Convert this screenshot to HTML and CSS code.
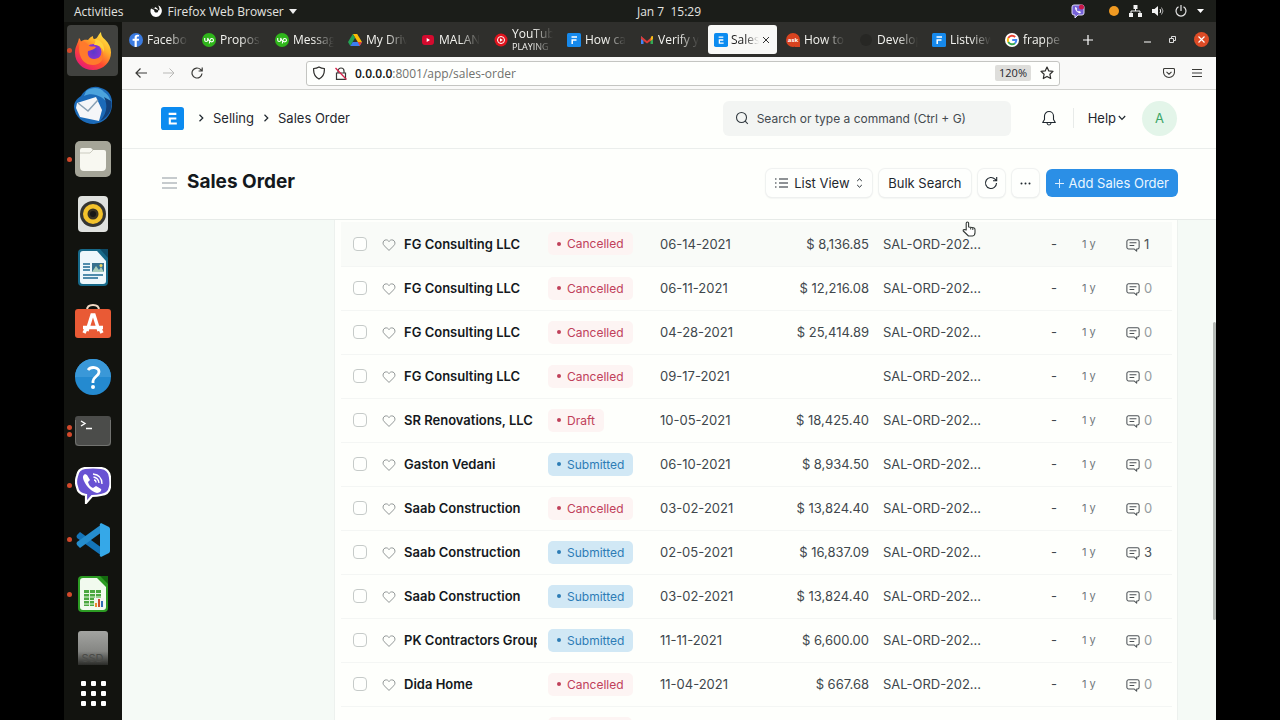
FILE: index.html
```html
<!DOCTYPE html>
<html lang="en">
<head>
  <meta charset="UTF-8">
  <meta name="viewport" content="width=device-width, initial-scale=1.0">
  <title>Sales Order</title>
  <link rel="stylesheet" href="styles.css">
</head>
<body>

<!-- shared icons -->
<svg class="sprite" aria-hidden="true">
  <symbol id="heart" viewBox="0 0 16 16"><path d="M8 14.2 2.4 8.7C.9 7.2.8 4.700 2.200 3.200c1.500-1.500 4-1.400 5.300.2L8 4l.5-.6c1.300-1.600 3.800-1.700 5.300-.2 1.400 1.500 1.300 4-.2 5.500z" fill="none" stroke="#8d9292" stroke-width="1.1" stroke-linejoin="round"/></symbol>
  <symbol id="comment" viewBox="0 0 16 16"><path d="M3 2h10a2 2 0 0 1 2 2v6.500a2 2 0 0 1-2 2h-.8V15l-3-2.500H3a2 2 0 0 1-2-2V4a2 2 0 0 1 2-2zM4.500 5.500h7M4.500 8.500h4.500" fill="none" stroke="#4c5255" stroke-width="1.200" stroke-linejoin="round" stroke-linecap="round"/></symbol>
  <symbol id="chevron" viewBox="0 0 8 8"><path d="M2.500.8 5.800 4 2.500 7.200" fill="none" stroke="#1f272e" stroke-width="1.200"/></symbol>
  <symbol id="upwork" viewBox="0 0 14 14"><circle cx="7" cy="7" r="7" fill="#2fb51b"/><path d="M2.700 5v2a1.500 1.500 0 0 0 3 0V5c.6 1.900 1.300 2.800 2 3.400M7.300 10.500l.8-3.600a1.700 1.700 0 1 1 1.700 2c-.9 0-1.500-.4-2.100-1" fill="none" stroke="#fff" stroke-width="1.100"/></symbol>
  <symbol id="frappe" viewBox="0 0 14 14"><rect width="14" height="14" rx="1.500" fill="#1689ec"/><path d="M4.500 4h5.500M5.200 11V7h4.300" fill="none" stroke="#fff" stroke-width="1.500"/></symbol>
  <symbol id="erp" viewBox="0 0 24 24"><rect width="24" height="24" rx="3" fill="#0b8bf0"/><path d="M8 7.200h8M16 12H9.200v5.200H16.500" fill="none" stroke="#fff" stroke-width="2.200"/></symbol>
</svg>

<div class="desktop">
  <header class="topbar">
    <button class="activities">Activities</button>
    <button class="app-menu">
      <svg width="12" height="12" viewBox="0 0 12 12"><path d="M2 2.500C4 4 4.800 3.200 5 2c3.500 1 4.300 5.500 1.500 5.600C4.800 7.600 4 6.500 4.200 5L1 3.500C-.8 7.500 2 12 6 12s6.500-4 5.700-7.500C11.300 2.500 10 1 8.200.4c1.200 1.700 1.600 3.600.9 5.100" fill="#fff"/></svg>
      Firefox Web Browser
      <svg width="8" height="5" viewBox="0 0 8 5"><path d="M0 0h8L4 5z" fill="#eee"/></svg>
    </button>
    <time class="clock">Jan 7&nbsp; 15:29</time>
    <div class="tray">
      <svg class="tray-viber" width="14" height="14" viewBox="0 0 14 14"><path d="M3 1h8a2 2 0 0 1 2 2v6a2 2 0 0 1-2 2H7l-3 3v-3H3a2 2 0 0 1-2-2V3a2 2 0 0 1 2-2z" fill="#7561d8" stroke="#ddd9f5"/><path d="M4 3.500c0 3 2 5 5 6l1-1.500-2-1-1 .6L5.500 6l.6-1L5 3z" fill="#fff"/><circle cx="10.500" cy="3" r="2.500" fill="#c9184a"/></svg>
      <svg width="10" height="10" viewBox="0 0 10 10"><circle cx="5" cy="5" r="5" fill="#f09a22"/></svg>
      <svg width="13" height="12" viewBox="0 0 13 12"><path d="M4.500 0h4v4h-4zM0 8h4v4H0zM9 8h4v4H9z" fill="#f2f2f2"/><path d="M6.500 4v2M2 8V6h9v2" stroke="#f2f2f2" fill="none"/></svg>
      <svg width="13" height="12" viewBox="0 0 13 12"><path d="M0 4h2.500L6 1v10L2.500 8H0z" fill="#f2f2f2"/><path d="M8 4q1.500 2 0 4" stroke="#f2f2f2" fill="none"/><path d="M9.500 2.500q3 3.500 0 7" stroke="#aaa" fill="none"/></svg>
      <svg width="12" height="12" viewBox="0 0 12 12"><path d="M6 0v6M3.500 1.700a5 5 0 1 0 5 0" stroke="#e8e8e8" stroke-width="1.200" fill="none"/></svg>
      <svg width="7" height="4" viewBox="0 0 7 4"><path d="M0 0h7L3.500 4z" fill="#fff"/></svg>
    </div>
  </header>

  <div class="workspace">
    <nav class="dock">
      <div class="dock-list">
        <a href="#" class="dock-item focused" aria-label="Firefox"><span class="dots"><i></i></span>
          <svg width="36" height="38" viewBox="0 0 36 38">
            <defs>
              <linearGradient id="ff" x1=".9" y1="0" x2=".2" y2="1"><stop offset="0" stop-color="#fff14a"/><stop offset=".35" stop-color="#ffb02a"/><stop offset=".65" stop-color="#ff4b30"/><stop offset="1" stop-color="#e5157c"/></linearGradient>
              <radialGradient id="ffp"><stop offset="0" stop-color="#5b39c9"/><stop offset="1" stop-color="#8b32d2"/></radialGradient>
            </defs>
            <path d="M4 6c1 1 1.500 2 2 3.500C8 8 10 7.500 13 8c2-3 4-3.500 5-4 0 1.500 0 2.500 1 3 2 0 3-1 4-3 1-2 2-3 3-4 0 3 1 5 4 7.500 4 4 6 8 6 13C36 30 28.500 38 18 38S0 30.500 0 21C0 14 3 12 4 6z" fill="url(#ff)"/>
            <circle cx="18.500" cy="20" r="8" fill="url(#ffp)"/>
            <path d="M5 10c5-1 7 1 9 4 3 1 5 0 7 1-2 3-5 3-8 4-1 4 1 8 6 8 5-.2 8-3 8-8 4 8-2 14-9 14C7 33 2 22 5 10z" fill="#ff7a2c"/>
            <path d="M20 7c6 1 10 6 9 13-2-6-6-7-10-7 1-2 2-4 1-6z" fill="#ffd23d"/>
          </svg></a>
        <a href="#" class="dock-item" aria-label="Thunderbird">
          <svg width="38" height="38" viewBox="0 0 38 38"><path d="M7 10C12 2 20-1 27 2c8 2 12 9 11 18-1 10-8 17-18 18C9 38 1 31 0 21c0-4 2-8 7-11z" fill="#1b6ab8"/><path d="M12 5c7-5 15-3 18 1 5 3 8 9 7 17-3-7-8-12-15-14-4-1-8-1-12 1z" fill="#4ba3dd"/><path d="M30 11c4 8 3 17-4 24 9-4 13-13 11-20z" fill="#124079"/><path d="m3 17 19-6 6 13-3 11L6 31 2 22z" fill="#f5f6f8"/><path d="m4 17 10 8 10-11" fill="none" stroke="#8aa1b4" stroke-width="1.500"/></svg></a>
        <a href="#" class="dock-item" aria-label="Files"><span class="dots"><i></i></span>
          <svg width="36" height="36" viewBox="0 0 36 36"><rect width="36" height="36" rx="5" fill="#a5a598"/><path d="M5 9q0-2 2-2h9l2 2h11q2 0 2 2v15q0 4-4 4H9q-4 0-4-4z" fill="#f8f8f1"/><path d="M5 12h10l3-3" stroke="#cbcbc0" fill="none"/></svg></a>
        <a href="#" class="dock-item" aria-label="Rhythmbox">
          <svg width="30" height="36" viewBox="0 0 30 36"><rect width="30" height="36" rx="4" fill="#dfe1de"/><circle cx="15" cy="18" r="13" fill="#353532"/><circle cx="15" cy="18" r="10" fill="#f3c22b"/><circle cx="15" cy="18" r="5.500" fill="#383223"/><circle cx="15" cy="18" r="3" fill="#161616"/></svg></a>
        <a href="#" class="dock-item" aria-label="LibreOffice Writer">
          <svg width="30" height="37" viewBox="0 0 30 37"><path d="M4 0h26v33q0 4-4 4H4q-4 0-4-4V4q0-4 4-4z" fill="#176989"/><path d="M5 2h14l9 10v20q0 3-3 3H5q-3 0-3-3V5q0-3 3-3z" fill="#eef7fb"/><path d="M22 0h8v9z" fill="#0e4a66"/><path d="M5 15h7M5 18h7M5 21h7M5 26h20M5 29h15" stroke="#1d6a91" stroke-width="1.500"/><path d="M14 14h12v9H14z" fill="#37708e"/><path d="m14 23 4-6 3 4 2-3 3 5z" fill="#a9ccba"/><circle cx="23" cy="16.500" r="1.500" fill="#efd35d"/></svg></a>
        <a href="#" class="dock-item" aria-label="Ubuntu Software">
          <svg width="36" height="36" viewBox="0 0 36 36"><path d="M12 6q0-5 6-5t6 5" fill="none" stroke="#f2d9c4" stroke-width="2"/><rect y="5" width="36" height="29" rx="3" fill="#e95a35"/><path d="m12 27 5-16h2l5 16M8 23.500h20M11 25l-2 4M25 25l2 4" fill="none" stroke="#fff" stroke-width="3.400"/></svg></a>
        <a href="#" class="dock-item" aria-label="Help">
          <svg width="36" height="36" viewBox="0 0 36 36"><circle cx="18" cy="18" r="18" fill="#248ad0"/><path d="M0 18a18 18 0 0 1 36 0z" fill="#3a98d8"/><path d="M13 11c3-4 11-3 11 2 0 4-6 5-6 9v2" fill="none" stroke="#fff" stroke-width="2.800"/><circle cx="18" cy="28" r="2" fill="#fff"/></svg></a>
        <a href="#" class="dock-item" aria-label="Terminal"><span class="dots"><i></i><i></i></span>
          <svg width="36" height="30" viewBox="0 0 36 30"><rect width="36" height="30" rx="3" fill="#4b4c4a"/><path d="M.5 4v22q0 3.500 3.500 3.500h28q3.500 0 3.500-3.500V4" fill="none" stroke="#727370"/><path d="m6 5 4 2.500L6 10M11 12.500h6" fill="none" stroke="#fff" stroke-width="1.400"/></svg></a>
        <a href="#" class="dock-item" aria-label="Viber"><span class="dots"><i></i></span>
          <svg width="36" height="37" viewBox="0 0 36 37"><path d="M10 1q8-1 16 0 8 1 9 9 1 7 0 10-1 7-9 8-4 1-9 1l-6 7v-8q-8-1-9-8-2-5 0-11 1-7 8-8z" fill="#6852d3" stroke="#fff" stroke-width="2.200"/><path d="M10 7c-3 2-2 4-1 7 3 6 7 10 13 12 3 0 5-3 4-4l-5-3-3 2c-3-1-4-3-5-6l2-2-3-5z" fill="#fff"/><path d="M18 7q9 1 9 10M18.500 10q5 1 5.500 6M19 13q2 0 2 2.500" fill="none" stroke="#fff" stroke-width="1.300"/></svg></a>
        <a href="#" class="dock-item" aria-label="Visual Studio Code"><span class="dots"><i></i></span>
          <svg width="34" height="34" viewBox="0 0 34 34"><path d="m1 12 3-3 22 16v8L1 15q-1-2 0-3z" fill="#1474b8"/><path d="m1 22 3 3L26 9V1L1 19q-1 1 0 3z" fill="#258dcd"/><path d="m25 0 8 4q1 1 1 2v22q0 1-1 2l-8 4q-2-1-1-3V3q-1-2 1-3z" fill="#35a8e8"/></svg></a>
        <a href="#" class="dock-item" aria-label="LibreOffice Calc"><span class="dots"><i></i></span>
          <svg width="30" height="36" viewBox="0 0 30 36"><path d="M4 0h26v32q0 4-4 4H4q-4 0-4-4V4q0-4 4-4z" fill="#2c9b23"/><path d="M5 2h14l9 9v20q0 3-3 3H5q-3 0-3-3V5q0-3 3-3z" fill="#f1faee"/><path d="M22 0h8v8z" fill="#14690f"/><path d="M6 14h17v16H6z" fill="#4ba83f"/><path d="M6 17.500h17M6 21h17M6 24.500h17M6 28h17M11.500 14v16M17.500 14v16" stroke="#e5f5df"/><path d="M16 22h10v9H16z" fill="#f3f3ee"/><path d="M17 27h2v4h-2z" fill="#e98d2c"/><path d="M20 23h2v8h-2z" fill="#cb4b2c"/><path d="M23 25h2v6h-2z" fill="#316fb4"/></svg></a>
        <a href="#" class="dock-item ssd" aria-label="SSD volume"><span>SSD</span></a>
      </div>
      <button class="apps" aria-label="Show applications">
        <svg width="25" height="25" viewBox="0 0 25 25" fill="#fff"><rect width="5" height="5" rx="1"/><rect x="10" width="5" height="5" rx="1"/><rect x="20" width="5" height="5" rx="1"/><rect y="10" width="5" height="5" rx="1"/><rect x="10" y="10" width="5" height="5" rx="1"/><rect x="20" y="10" width="5" height="5" rx="1"/><rect y="20" width="5" height="5" rx="1"/><rect x="10" y="20" width="5" height="5" rx="1"/><rect x="20" y="20" width="5" height="5" rx="1"/></svg>
      </button>
    </nav>

    <div class="browser">
      <div class="tabs">
        <a href="#" class="tab"><svg width="14" height="14" viewBox="0 0 14 14"><circle cx="7" cy="7" r="7" fill="#3b7be0"/><path d="M7.800 14V7.800h2l.3-2.100H7.800V4.600q0-1 1.100-1H10V1.900Q5.600 1 5.600 4.500v1.200h-2v2.100h2V14z" fill="#fff"/></svg><span class="tab-title">Facebook</span></a>
        <a href="#" class="tab"><svg width="14" height="14"><use href="#upwork"/></svg><span class="tab-title">Proposals</span></a>
        <a href="#" class="tab"><svg width="14" height="14"><use href="#upwork"/></svg><span class="tab-title">Messages</span></a>
        <a href="#" class="tab"><svg width="14" height="14" viewBox="0 0 14 14"><path d="M4.800 1h4.400L14 9H9.800z" fill="#fbbc05"/><path d="m4.800 1 2.300 3.800L2.300 13 0 9z" fill="#23a455"/><path d="M4.700 9H14l-2.300 4H2.300z" fill="#3d7df0"/><path d="M9.800 9H14l-2.300 4z" fill="#e54335"/></svg><span class="tab-title">My Drive</span></a>
        <a href="#" class="tab"><svg width="14" height="14" viewBox="0 0 14 14"><rect x="1" y="2" width="12" height="10" rx="3" fill="#d40a2e"/><path d="m5.700 5 3.300 2-3.300 2z" fill="#fff"/></svg><span class="tab-title">MALANG</span></a>
        <a href="#" class="tab"><svg width="14" height="14" viewBox="0 0 14 14"><circle cx="7" cy="7" r="6.500" fill="#e0131d"/><circle cx="7" cy="7" r="3.500" fill="none" stroke="#fff"/><path d="m6 5.300 2.800 1.700L6 8.700z" fill="#fff"/></svg><span class="tab-title two-line"><span>YouTube</span><small>PLAYING</small></span></a>
        <a href="#" class="tab"><svg width="14" height="14"><use href="#frappe"/></svg><span class="tab-title">How can</span></a>
        <a href="#" class="tab"><svg width="14" height="14" viewBox="0 0 14 14"><path d="M1 3v8h2.500V6" fill="#4285f4"/><path d="M13 3v8h-2.500V6" fill="#34a853"/><path d="m1 3 6 5 6-5v3L7 10.500 1 6z" fill="#dc3c38"/><path d="M11 3.500 13 3v3l-2.500 2z" fill="#f6bb17"/></svg><span class="tab-title">Verify your</span></a>
        <a href="#" class="tab active"><svg width="14" height="14"><use href="#erp"/></svg><span class="tab-title">Sales</span><svg width="8" height="8" viewBox="0 0 8 8"><path d="m1 1 6 6M7 1 1 7" stroke="#333"/></svg></a>
        <a href="#" class="tab"><svg width="14" height="14" viewBox="0 0 14 14"><path d="M7 0a7 7 0 1 1 0 14 7 7 0 0 1 0-14zM9 9h5v5H9z" fill="#d8431f"/><text x="7" y="9" text-anchor="middle" class="ask">ask</text></svg><span class="tab-title">How to</span></a>
        <a href="#" class="tab"><svg width="14" height="14" viewBox="0 0 14 14"><circle cx="7" cy="7" r="6" fill="#272724"/></svg><span class="tab-title">Develop</span></a>
        <a href="#" class="tab"><svg width="14" height="14"><use href="#frappe"/></svg><span class="tab-title">Listview</span></a>
        <a href="#" class="tab"><svg width="14" height="14" viewBox="0 0 14 14"><circle cx="7" cy="7" r="7" fill="#fff"/><g fill="none" stroke-width="1.900"><path d="M10.200 4A4.300 4.300 0 0 0 3.300 5" stroke="#ea4335"/><path d="M3.300 5a4.300 4.300 0 0 0 0 4" stroke="#fbbc05"/><path d="M3.300 9a4.300 4.300 0 0 0 6.700 1.200" stroke="#34a853"/><path d="M10 10.200A4.300 4.300 0 0 0 11.300 7H7.200" stroke="#4285f4"/></g></svg><span class="tab-title">frappe</span></a>
        <button class="new-tab" aria-label="New tab"><svg width="10" height="10" viewBox="0 0 10 10"><path d="M5 0v10M0 5h10" stroke="#fff" stroke-width="1.200"/></svg></button>
        <div class="window-controls">
          <button aria-label="Minimize"><svg width="7" height="7" viewBox="0 0 7 7"><path d="M0 6h7" stroke="#ddd" stroke-width="1.200"/></svg></button>
          <button aria-label="Restore"><svg width="7" height="7" viewBox="0 0 7 7"><path d="M.5 2.500h4v4h-4zM2.500 2V.5h4v4H5" fill="none" stroke="#ddd"/></svg></button>
          <button class="win-close" aria-label="Close"><svg width="7" height="7" viewBox="0 0 7 7"><path d="m.5.5 6 6M6.500.5l-6 6" stroke="#fff" stroke-width="1.200"/></svg></button>
        </div>
      </div>

      <div class="toolbar">
        <button aria-label="Back"><svg width="12" height="12" viewBox="0 0 12 12"><path d="M12 6H1M5.500 1.500 1 6l4.500 4.500" fill="none" stroke="#3b3b38" stroke-width="1.200"/></svg></button>
        <button aria-label="Forward"><svg width="12" height="12" viewBox="0 0 12 12"><path d="M0 6h11M6.500 1.500 11 6l-4.500 4.500" fill="none" stroke="#b9b9b7"/></svg></button>
        <button aria-label="Reload"><svg width="12" height="12" viewBox="0 0 12 12"><path d="M11 6.500A5 5 0 1 1 9.500 2.400L11 4M11.200.5V4H7.600" fill="none" stroke="#3b3b38" stroke-width="1.200"/></svg></button>
        <div class="urlbar">
          <svg width="12" height="14" viewBox="0 0 12 14"><path d="M6 1q2.500 1.500 5.300 1.500Q12 10 6 13 0 10 .7 2.500 3.500 2.500 6 1z" fill="none" stroke="#2c2c2a" stroke-width="1.200"/></svg>
          <svg class="insecure" width="12" height="13" viewBox="0 0 12 13"><path d="M3 6V4a3 3 0 0 1 6 0v2M1.500 6h9v6.400h-9z" fill="none" stroke="#383836" stroke-width="1.200"/><path d="m.5 1 11 11.500" stroke="#d5244c" stroke-width="1.300"/></svg>
          <label for="url">0.0.0.0</label><input id="url" type="text" value=":8001/app/sales-order">
          <button class="zoom-level">120%</button>
          <svg width="14" height="14" viewBox="0 0 14 14"><path d="m7 1 1.800 3.900 4.200.5-3.100 2.900.8 4.200L7 10.400l-3.700 2.100.8-4.200L1 5.400l4.200-.5z" fill="none" stroke="#2c2c2a" stroke-width="1.200" stroke-linejoin="round"/></svg>
        </div>
        <button aria-label="Save to Pocket"><svg width="12" height="12" viewBox="0 0 12 12"><path d="M1.500 1.500h9q1 0 1 1V5a5.500 5.500 0 0 1-11 0V2.500q0-1 1-1zM3.500 4.800 6 7.200l2.500-2.400" fill="none" stroke="#3b3b38" stroke-width="1.100"/></svg></button>
        <button aria-label="Open application menu"><svg width="10" height="10" viewBox="0 0 10 10"><path d="M0 1.500h10M0 5h10M0 8.500h10" stroke="#3b3b38" stroke-width="1.100"/></svg></button>
      </div>

      <div class="page">
        <div class="navbar">
          <a href="#" class="logo" aria-label="Home"><svg width="23" height="23"><use href="#erp"/></svg></a>
          <svg width="8" height="8"><use href="#chevron"/></svg>
          <a href="#">Selling</a>
          <svg width="8" height="8"><use href="#chevron"/></svg>
          <a href="#">Sales Order</a>
          <label class="search">
            <svg width="14" height="14" viewBox="0 0 14 14"><circle cx="6.500" cy="6.500" r="5" fill="none" stroke="#323a40" stroke-width="1.100"/><path d="m10.200 10.200 2.600 2.600" stroke="#323a40" stroke-width="1.100"/></svg>
            <input type="text" aria-label="Search" placeholder="Search or type a command (Ctrl + G)">
          </label>
          <button class="bell" aria-label="Notifications"><svg width="14" height="16" viewBox="0 0 14 16"><path d="M2.500 9.500V6a4.500 4.500 0 0 1 9 0v3.500L13.300 12.500H.7zM5 13q.3 2 2 2t2-2" fill="none" stroke="#1f272e" stroke-width="1.100" stroke-linejoin="round"/></svg></button>
          <button class="help">Help <svg width="8" height="6" viewBox="0 0 8 6"><path d="m.8 1 3.200 3.300L7.200 1" fill="none" stroke="#1f272e" stroke-width="1.200"/></svg></button>
          <button class="avatar">A</button>
        </div>

        <div class="page-head">
          <button class="sidebar-toggle" aria-label="Toggle sidebar"><svg width="15" height="12" viewBox="0 0 15 12"><path d="M0 1h15M0 6h15M0 11h15" stroke="#8d989e" stroke-width="1.200"/></svg></button>
          <h1>Sales Order</h1>
          <div class="actions">
            <label class="btn view-switch">
              <svg width="13" height="12" viewBox="0 0 13 12"><path d="M0 2h1.500M0 6h1.500M0 10h1.500M4 2h9M4 6h9M4 10h9" stroke="#1f272e" stroke-width="1.200"/></svg>
              <select aria-label="View"><option>List View</option><option>Report</option></select>
              <svg width="7" height="10" viewBox="0 0 7 10"><path d="M1.200 3 3.500.8 5.800 3M1.200 7l2.300 2.200L5.800 7" fill="none" stroke="#1f272e"/></svg>
            </label>
            <button class="btn">Bulk Search</button>
            <button class="btn btn-icon" aria-label="Refresh"><svg width="14" height="14" viewBox="0 0 14 14"><path d="M12.500 7A5.500 5.500 0 1 1 11 3.200l1.500 1.600M12.700 1v3.800H9" fill="none" stroke="#1f272e" stroke-width="1.100"/></svg></button>
            <button class="btn btn-icon" aria-label="More"><svg width="11" height="3" viewBox="0 0 11 3" fill="#1f272e"><circle cx="1.500" cy="1.500" r="1"/><circle cx="5.500" cy="1.500" r="1"/><circle cx="9.500" cy="1.500" r="1"/></svg></button>
            <button class="btn btn-primary"><svg width="9" height="9" viewBox="0 0 9 9"><path d="M4.500 0v9M0 4.500h9" stroke="#d9edff"/></svg>Add Sales Order</button>
          </div>
        </div>

        <div class="content">
          <div class="list-card">
            <table class="list">
              <colgroup><col class="c-check"><col class="c-like"><col><col class="c-status"><col class="c-date"><col class="c-amount"><col class="c-id"><col class="c-assign"><col class="c-age"><col class="c-comments"></colgroup>
              <tbody>
                <tr class="hovered">
                  <td><input type="checkbox" aria-label="Select row"></td><td><svg width="14" height="14"><use href="#heart"/></svg></td>
                  <td class="name">FG Consulting LLC</td><td><span class="pill red">Cancelled</span></td><td>06-14-2021</td><td class="amount">$ 8,136.85</td>
                  <td>SAL-ORD-202...</td><td>-</td><td class="age">1 y</td><td class="comments has"><svg width="14" height="14"><use href="#comment"/></svg>1</td>
                </tr>
                <tr>
                  <td><input type="checkbox" aria-label="Select row"></td><td><svg width="14" height="14"><use href="#heart"/></svg></td>
                  <td class="name">FG Consulting LLC</td><td><span class="pill red">Cancelled</span></td><td>06-11-2021</td><td class="amount">$ 12,216.08</td>
                  <td>SAL-ORD-202...</td><td>-</td><td class="age">1 y</td><td class="comments"><svg width="14" height="14"><use href="#comment"/></svg>0</td>
                </tr>
                <tr>
                  <td><input type="checkbox" aria-label="Select row"></td><td><svg width="14" height="14"><use href="#heart"/></svg></td>
                  <td class="name">FG Consulting LLC</td><td><span class="pill red">Cancelled</span></td><td>04-28-2021</td><td class="amount">$ 25,414.89</td>
                  <td>SAL-ORD-202...</td><td>-</td><td class="age">1 y</td><td class="comments"><svg width="14" height="14"><use href="#comment"/></svg>0</td>
                </tr>
                <tr>
                  <td><input type="checkbox" aria-label="Select row"></td><td><svg width="14" height="14"><use href="#heart"/></svg></td>
                  <td class="name">FG Consulting LLC</td><td><span class="pill red">Cancelled</span></td><td>09-17-2021</td><td class="amount"></td>
                  <td>SAL-ORD-202...</td><td>-</td><td class="age">1 y</td><td class="comments"><svg width="14" height="14"><use href="#comment"/></svg>0</td>
                </tr>
                <tr>
                  <td><input type="checkbox" aria-label="Select row"></td><td><svg width="14" height="14"><use href="#heart"/></svg></td>
                  <td class="name">SR Renovations, LLC</td><td><span class="pill red">Draft</span></td><td>10-05-2021</td><td class="amount">$ 18,425.40</td>
                  <td>SAL-ORD-202...</td><td>-</td><td class="age">1 y</td><td class="comments"><svg width="14" height="14"><use href="#comment"/></svg>0</td>
                </tr>
                <tr>
                  <td><input type="checkbox" aria-label="Select row"></td><td><svg width="14" height="14"><use href="#heart"/></svg></td>
                  <td class="name">Gaston Vedani</td><td><span class="pill blue">Submitted</span></td><td>06-10-2021</td><td class="amount">$ 8,934.50</td>
                  <td>SAL-ORD-202...</td><td>-</td><td class="age">1 y</td><td class="comments"><svg width="14" height="14"><use href="#comment"/></svg>0</td>
                </tr>
                <tr>
                  <td><input type="checkbox" aria-label="Select row"></td><td><svg width="14" height="14"><use href="#heart"/></svg></td>
                  <td class="name">Saab Construction</td><td><span class="pill red">Cancelled</span></td><td>03-02-2021</td><td class="amount">$ 13,824.40</td>
                  <td>SAL-ORD-202...</td><td>-</td><td class="age">1 y</td><td class="comments"><svg width="14" height="14"><use href="#comment"/></svg>0</td>
                </tr>
                <tr>
                  <td><input type="checkbox" aria-label="Select row"></td><td><svg width="14" height="14"><use href="#heart"/></svg></td>
                  <td class="name">Saab Construction</td><td><span class="pill blue">Submitted</span></td><td>02-05-2021</td><td class="amount">$ 16,837.09</td>
                  <td>SAL-ORD-202...</td><td>-</td><td class="age">1 y</td><td class="comments has"><svg width="14" height="14"><use href="#comment"/></svg>3</td>
                </tr>
                <tr>
                  <td><input type="checkbox" aria-label="Select row"></td><td><svg width="14" height="14"><use href="#heart"/></svg></td>
                  <td class="name">Saab Construction</td><td><span class="pill blue">Submitted</span></td><td>03-02-2021</td><td class="amount">$ 13,824.40</td>
                  <td>SAL-ORD-202...</td><td>-</td><td class="age">1 y</td><td class="comments"><svg width="14" height="14"><use href="#comment"/></svg>0</td>
                </tr>
                <tr>
                  <td><input type="checkbox" aria-label="Select row"></td><td><svg width="14" height="14"><use href="#heart"/></svg></td>
                  <td class="name">PK Contractors Group</td><td><span class="pill blue">Submitted</span></td><td>11-11-2021</td><td class="amount">$ 6,600.00</td>
                  <td>SAL-ORD-202...</td><td>-</td><td class="age">1 y</td><td class="comments"><svg width="14" height="14"><use href="#comment"/></svg>0</td>
                </tr>
                <tr>
                  <td><input type="checkbox" aria-label="Select row"></td><td><svg width="14" height="14"><use href="#heart"/></svg></td>
                  <td class="name">Dida Home</td><td><span class="pill red">Cancelled</span></td><td>11-04-2021</td><td class="amount">$ 667.68</td>
                  <td>SAL-ORD-202...</td><td>-</td><td class="age">1 y</td><td class="comments"><svg width="14" height="14"><use href="#comment"/></svg>0</td>
                </tr>
                <tr>
                  <td></td><td></td><td></td><td><span class="pill red pill-empty"></span></td><td></td><td></td><td></td><td></td><td></td><td></td>
                </tr>
              </tbody>
            </table>
          </div>
          <div class="scroll-thumb"></div>
          <svg class="pointer" width="14" height="16" viewBox="0 0 14 16"><path d="M4.200 9V2.200a1.200 1.200 0 0 1 2.400 0V6l5 .8q1.400.3 1.400 1.700v3q0 3-2.500 3.500H6.500L1.300 10q-.5-1.500 1-1.500z" fill="#fff" stroke="#333936" stroke-width="1.100" stroke-linejoin="round"/><path d="M8.700 6.500v2M10.800 7v2" stroke="#333936"/></svg>
        </div>
      </div>
    </div>
  </div>
</div>

</body>
</html>
```

FILE: styles.css
```css
* {
  box-sizing: border-box;
}

body {
  margin: 0;
  background: #000;
  font-family: Inter, "Liberation Sans", sans-serif;
  font-size: 13px;
  color: #1f272e;
}

a {
  color: inherit;
  text-decoration: none;
}

button {
  padding: 0;
  border: none;
  background: none;
  font: inherit;
  color: inherit;
  cursor: pointer;
}

svg {
  flex: none;
  display: block;
}

.sprite {
  display: none;
}

.desktop {
  display: flex;
  flex-direction: column;
  height: 100vh;
  margin: 0 64px;
  overflow: hidden;
}

/* gnome top bar */
.topbar {
  position: relative;
  display: flex;
  align-items: center;
  gap: 27px;
  height: 22px;
  padding: 0 12px 0 10px;
  background: #1b1d19;
  color: #e4e4e0;
  font-family: "Open Sans", sans-serif;
  font-size: 12px;
}

.app-menu {
  display: flex;
  align-items: center;
  gap: 5px;
}

.clock {
  position: absolute;
  left: 58px;
  right: 0;
  text-align: center;
  pointer-events: none;
}

.tray {
  display: flex;
  align-items: center;
  gap: 10px;
  margin-left: auto;
}

.tray-viber {
  margin-right: 14px;
}

.workspace {
  display: flex;
  flex: 1;
  min-height: 0;
}

/* dock */
.dock {
  display: flex;
  flex-direction: column;
  width: 58px;
  padding-top: 3px;
  background: #12130f;
}

.dock-list {
  display: flex;
  flex-direction: column;
  justify-content: space-between;
  flex: 1;
  padding: 0 4px 0 3px;
}

.dock-item {
  position: relative;
  display: flex;
  align-items: center;
  justify-content: center;
  height: 51px;
  border-radius: 4px;
}

.dock-item.focused {
  background: #41423f;
}

.dots {
  position: absolute;
  left: 0;
  display: flex;
  flex-direction: column;
  gap: 2px;
}

.dots i {
  width: 5px;
  height: 5px;
  border-radius: 50%;
  background: #d3492c;
}

.ssd span {
  display: flex;
  align-items: flex-end;
  justify-content: center;
  width: 30px;
  height: 34px;
  border-radius: 3px 3px 0 0;
  background: linear-gradient(#a3a4a1, #858683 60%, #2a2b28);
  color: #4a4b48;
  font-size: 11px;
}

.apps {
  display: flex;
  justify-content: center;
  height: 46px;
  padding-top: 7px;
}

/* firefox */
.browser {
  display: flex;
  flex-direction: column;
  flex: 1;
  min-width: 0;
  background: #fefffc;
}

.tabs {
  display: flex;
  align-items: center;
  height: 35px;
  background: #2f2f2c;
  color: #f4f4f0;
  font-family: "Open Sans", sans-serif;
  font-size: 12px;
}

.tab {
  display: flex;
  align-items: center;
  gap: 4px;
  flex: 0 1 73px;
  min-width: 0;
  height: 29px;
  padding: 0 7px;
}

.tab-title {
  flex: 1;
  overflow: hidden;
  white-space: nowrap;
  -webkit-mask-image: linear-gradient(90deg, #000 50%, transparent);
  mask-image: linear-gradient(90deg, #000 50%, transparent);
}

.two-line {
  display: flex;
  flex-direction: column;
  line-height: 14px;
}

.two-line small {
  font-size: 9px;
  line-height: 12px;
}

.tab.active {
  flex-basis: 69px;
  gap: 3px;
  margin: 0 2px;
  padding-left: 6px;
  border-radius: 3px;
  background: #f9f9f7;
  color: #222;
}

.ask {
  fill: #fff;
  font-size: 6px;
  font-weight: 700;
}

.new-tab {
  display: flex;
  justify-content: center;
  width: 34px;
}

.window-controls {
  display: flex;
  align-items: center;
  gap: 18px;
  margin-left: auto;
  padding-right: 7px;
}

.win-close {
  display: flex;
  align-items: center;
  justify-content: center;
  width: 15px;
  height: 15px;
  border-radius: 50%;
  background: #dd4b26;
}

.toolbar {
  display: flex;
  align-items: center;
  height: 33px;
  padding: 0 5px;
  border-bottom: 1px solid #d2d3d0;
  background: #f9f9f8;
}

.toolbar > button {
  display: flex;
  align-items: center;
  justify-content: center;
  width: 28px;
  height: 28px;
}

.urlbar {
  display: flex;
  align-items: center;
  flex: 1;
  height: 25px;
  margin: 0 95px;
  padding: 0 5px 0 6px;
  border: 1px solid #c4c5c2;
  border-radius: 3px;
  background: #fefffd;
  font-family: "Open Sans", sans-serif;
  font-size: 12px;
}

.insecure {
  margin: 0 8px 0 10px;
}

.urlbar label {
  color: #111;
  font-weight: 600;
}

.urlbar input {
  flex: 1;
  min-width: 0;
  padding: 0;
  border: none;
  outline: none;
  background: none;
  font: inherit;
  color: #70716e;
}

.zoom-level {
  width: 36px;
  height: 16px;
  margin-right: 9px;
  border-radius: 2px;
  background: #dededb;
  font-size: 11px;
  line-height: 16px;
}

/* erpnext page */
.page {
  display: flex;
  flex-direction: column;
  flex: 1;
  min-height: 0;
}

.navbar {
  display: flex;
  align-items: center;
  height: 59px;
  padding: 0 39px 2px;
  border-bottom: 1px solid #ebeeec;
}

.logo {
  margin-right: 13px;
}

.navbar > a + svg {
  margin-right: 8px;
}

.navbar > a:not(.logo) {
  margin-right: 8px;
}

.search {
  display: flex;
  align-items: center;
  gap: 8px;
  width: 288px;
  height: 35px;
  margin-left: auto;
  padding: 0 12px;
  border-radius: 6px;
  background: #f3f5f3;
}

.search input {
  flex: 1;
  min-width: 0;
  padding: 0;
  border: none;
  outline: none;
  background: none;
  font: inherit;
  font-size: 12px;
}

.search input::placeholder {
  color: #434a4f;
  opacity: 1;
}

.bell {
  padding: 3px 17px 3px 31px;
}

.help {
  display: flex;
  align-items: center;
  gap: 2px;
  height: 20px;
  padding: 0 16px 0 14px;
  border-left: 1px solid #e8ebe9;
}

.avatar {
  width: 35px;
  height: 35px;
  border-radius: 50%;
  background: #e3f5e9;
  color: #3aa567;
}

.page-head {
  display: flex;
  align-items: center;
  height: 71px;
  padding: 0 38px 2px 40px;
  border-bottom: 1px solid #e7ebe8;
}

.sidebar-toggle {
  margin-right: 10px;
}

h1 {
  margin: 0;
  padding-bottom: 2px;
  font-size: 19px;
  font-weight: 700;
  line-height: 24px;
  color: #14191d;
}

.actions {
  display: flex;
  gap: 7px;
  margin-left: auto;
}

.btn {
  display: flex;
  align-items: center;
  height: 28px;
  padding: 0 9px;
  border-radius: 6px;
  background: #fefffd;
  box-shadow: 0 0 1px 1px #eff1f0, 0 1px 2px #dfe2e0;
}

.view-switch {
  gap: 6px;
}

.view-switch select {
  appearance: none;
  padding: 0;
  border: none;
  background: none;
  font: inherit;
  color: inherit;
}

.btn-icon {
  justify-content: center;
  width: 27px;
  padding: 0;
}

.btn-primary {
  gap: 5px;
  background: #2b8fe6;
  box-shadow: none;
  color: #eaf6ff;
}

.content {
  position: relative;
  flex: 1;
  min-height: 0;
  padding: 0 38px 0 212px;
  overflow: hidden;
  background: #f5faf6;
}

.list-card {
  padding: 2px 5px 0 6px;
  border: 1px solid #edf1ee;
  border-top: none;
  background: #fefffc;
}

.list {
  width: 100%;
  table-layout: fixed;
  border-collapse: collapse;
}

.c-check { width: 34px; }
.c-like { width: 29px; }
.c-status { width: 109px; }
.c-date { width: 112px; }
.c-amount { width: 111px; }
.c-id { width: 182px; }
.c-assign { width: 31px; }
.c-age { width: 44px; }
.c-comments { width: 46px; }

.list td {
  height: 44px;
  padding: 0 0 0 14px;
  border-bottom: 1px solid #f4f6f4;
  white-space: nowrap;
  color: #40474c;
}

.list td svg {
  display: inline-block;
  vertical-align: middle;
}

.list td:nth-child(1) {
  padding-left: 12px;
}

.list td:nth-child(2) {
  padding-left: 7px;
}

.list td:nth-child(4) {
  padding-left: 11px;
}

.list td:nth-child(8),
.list td:nth-child(9),
.list td:nth-child(10) {
  padding-left: 0;
}

.list .hovered td {
  background: #f9fbf8;
}

.list input {
  appearance: none;
  display: block;
  width: 14px;
  height: 14px;
  margin: 0;
  border: 1px solid #c6cbc9;
  border-radius: 4px;
  background: #fefffd;
}

.list .name {
  padding-left: 0;
  overflow: hidden;
  font-weight: 600;
  color: #14191d;
}

.list .amount {
  padding-left: 0;
  text-align: right;
}

.list .age {
  font-size: 11px;
  color: #6f777c;
}

.list .comments {
  color: #959c9f;
}

.list .comments.has {
  color: #4c5255;
}

.comments svg {
  margin-right: 4px;
}

.pill {
  display: inline-flex;
  align-items: center;
  gap: 6px;
  height: 23px;
  padding: 0 9px;
  border-radius: 5px;
  font-size: 12px;
  vertical-align: middle;
}

.pill::before {
  content: "";
  width: 4px;
  height: 4px;
  border-radius: 50%;
  background: currentColor;
}

.pill.red {
  background: #fdf4f3;
  color: #c0405a;
}

.pill.blue {
  background: #d1e8f5;
  color: #2d7cb5;
}

.pill-empty {
  width: 84px;
}

.scroll-thumb {
  position: absolute;
  top: 102px;
  right: 0;
  width: 3px;
  height: 298px;
  border-radius: 2px;
  background: #b4b9b5;
}

.pointer {
  position: absolute;
  left: 840px;
  top: 1px;
}
```
